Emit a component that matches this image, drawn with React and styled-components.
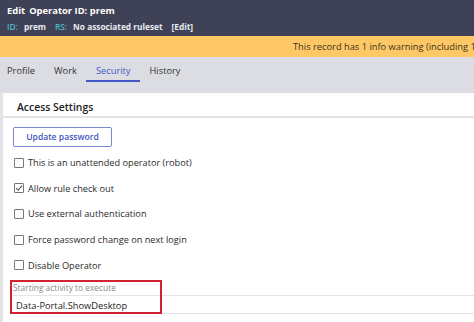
import React from 'react';
import styled, {createGlobalStyle} from 'styled-components';

const GlobalStyle = createGlobalStyle`
   body {
      margin: 0;
      background: #e3e4e8;
      font-family: "Open Sans", "Liberation Sans", sans-serif;
      color: #2f2f2f;
   }
`;

const checkboxes = [
   {label: 'This is an unattended operator (robot)', checked: false},
   {label: 'Allow rule check out', checked: true},
   {label: 'Use external authentication', checked: false},
   {label: 'Force password change on next login', checked: false},
   {label: 'Disable Operator', checked: false},
];

const tabs = ['Profile', 'Work', 'Security', 'History'];

const App = () => {
   return (
      <>
         <GlobalStyle />
         <Page>
            <Header>
               <Title>
                  <span>Edit</span>
                  <span>Operator ID: prem</span>
               </Title>
               <SubLine>
                  <Key>ID:</Key>
                  <Value>prem</Value>
                  <Key>RS:</Key>
                  <Value>No associated ruleset</Value>
                  <Value>[Edit]</Value>
               </SubLine>
            </Header>

            <WarningBar>This record has 1 info warning (including 1 for the current rule)</WarningBar>

            <TabBar>
               {tabs.map(tab => (
                  <Tab key={tab} active={tab === 'Security'}>{tab}</Tab>
               ))}
            </TabBar>

            <Panel>
               <SectionTitle>Access Settings</SectionTitle>
               <SectionBody>
                  <Button>Update password</Button>
                  {checkboxes.map(item => (
                     <CheckRow key={item.label}>
                        <Box>
                           {item.checked && (
                              <svg width="8" height="8" viewBox="0 0 8 8">
                                 <path d="M1 4.2 L3.2 6.3 L7 1.6" fill="none" stroke="#555" strokeWidth="1.1" />
                              </svg>
                           )}
                        </Box>
                        {item.label}
                     </CheckRow>
                  ))}
                  <Field>
                     <FieldLabel>Starting activity to execute</FieldLabel>
                     <FieldValue>Data-Portal.ShowDesktop</FieldValue>
                     <Highlight />
                  </Field>
               </SectionBody>
            </Panel>
         </Page>
      </>
   );
}

const Page = styled.div`
   width: 474px;
   height: 322px;
   overflow: hidden;
`;

const Header = styled.header`
   height: 36px;
   box-sizing: border-box;
   padding: 3px 7px 0;
   background: #3f4256;
   color: #fff;
`;

const Title = styled.div`
   display: flex;
   gap: 4px;
   font-size: 9.4px;
   font-weight: 700;
   line-height: 16px;
`;

const SubLine = styled.div`
   display: flex;
   gap: 9px;
   margin-top: 1px;
   font-size: 8.3px;
   font-weight: 700;
   line-height: 13px;
`;

const Key = styled.span`
   color: #4bb7c4;
   font-weight: 600;
   margin-right: -3px;
`;

const Value = styled.span`
   color: #e9eaf0;
`;

const WarningBar = styled.div`
   height: 21px;
   box-sizing: border-box;
   padding-left: 293px;
   background: #fdc865;
   color: #3a3320;
   font-size: 9.3px;
   line-height: 22px;
   white-space: nowrap;
   overflow: hidden;
`;

const TabBar = styled.nav`
   height: 36px;
   box-sizing: border-box;
   display: flex;
   padding: 5px 0 0 0;
   background: #dcdde2;
`;

const Tab = styled.div`
   height: 18px;
   padding: 0 9.5px;
   font-size: 9.3px;
   line-height: 17px;
   color: ${props => props.active ? '#4557c8' : '#333'};
   border-bottom: 2px solid ${props => props.active ? '#4557c8' : 'transparent'};
   &:first-child {
      margin-left: -2.5px;
   }
`;

const Panel = styled.main`
   margin-left: 3px;
   background: #fff;
   height: 229px;
`;

const SectionTitle = styled.h2`
   margin: 0;
   height: 25px;
   box-sizing: border-box;
   padding: 7px 0 0 14px;
   font-size: 10.4px;
   font-weight: 600;
   line-height: 15px;
   color: #222;
   border-bottom: 2px solid #e4e4e6;
`;

const SectionBody = styled.div`
   padding: 9px 0 0 10px;
`;

const Button = styled.button`
   display: block;
   width: 99px;
   height: 20px;
   padding: 0;
   border: 1px solid #7b86d6;
   border-radius: 2px;
   background: #fff;
   color: #4656c0;
   font-family: inherit;
   font-size: 8.6px;
   font-weight: 600;
   margin-bottom: 3px;
`;

const CheckRow = styled.label`
   display: flex;
   align-items: center;
   gap: 4px;
   height: 25.6px;
   font-size: 9.2px;
   color: #2a2a2a;
`;

const Box = styled.span`
   width: 8px;
   height: 8px;
   margin-left: 1px;
   border: 1px solid #777;
   border-radius: 1px;
   display: flex;
   align-items: center;
   justify-content: center;
`;

const Field = styled.div`
   position: relative;
   margin-left: -2px;
   margin-top: 3px;
`;

const FieldLabel = styled.div`
   height: 14px;
   padding-left: 2px;
   font-size: 8.4px;
   line-height: 14px;
   color: #888;
   border-bottom: 1px solid #e4e4e4;
`;

const FieldValue = styled.div`
   height: 17px;
   padding-left: 5px;
   font-size: 9.3px;
   line-height: 19px;
   color: #222;
   border-bottom: 1px solid #e4e4e4;
`;

const Highlight = styled.div`
   position: absolute;
   left: -1px;
   top: -1px;
   width: 148px;
   height: 30px;
   border: 2px solid #d4212f;
   pointer-events: none;
`;

export default App;
